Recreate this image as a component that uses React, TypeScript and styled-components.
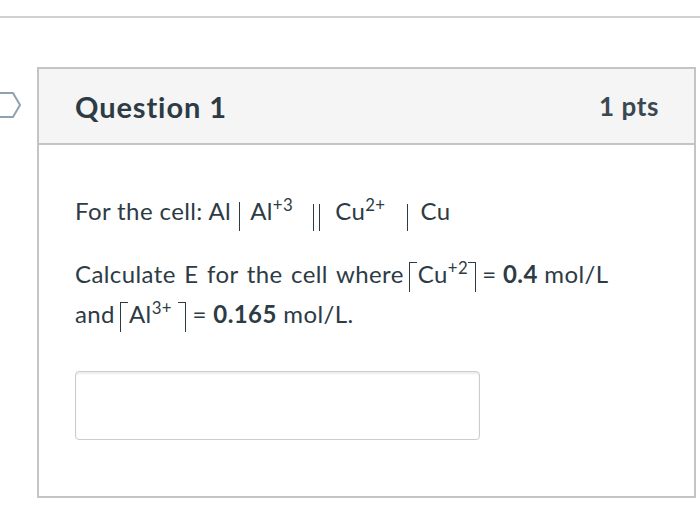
import React from 'react';
import styled, { createGlobalStyle } from 'styled-components';

const GlobalStyle = createGlobalStyle`
    html, body {
        margin: 0;
        padding: 0;
        background: #ffffff;
    }
    body {
        font-family: Lato, "Open Sans", "Liberation Sans", sans-serif;
        color: #2d3b45;
    }
`;

const Page = styled.div`
    width: 700px;
    height: 528px;
    padding-top: 16px;
    box-sizing: border-box;
    overflow: hidden;
`;

const TopRule = styled.div`
    height: 2px;
    background: #cfd2d4;
`;

const Row = styled.div`
    display: flex;
    align-items: flex-start;
    margin-top: 49px;
`;

const IconCol = styled.div`
    width: 37px;
    flex: 0 0 37px;
    padding-top: 24px;
`;

const Card = styled.div`
    flex: 0 0 659px;
    border: 2px solid #c4c4c4;
    box-sizing: border-box;
    height: 431px;
    display: flex;
    flex-direction: column;
`;

const Header = styled.div`
    display: flex;
    align-items: center;
    justify-content: space-between;
    height: 74px;
    padding: 0 35px 0 36px;
    background: #f5f5f5;
    border-bottom: 2px solid #c4c4c4;
    flex: 0 0 auto;
`;

const Title = styled.h2`
    margin: 0;
    font-size: 29px;
    font-weight: 700;
    color: #2d3b45;
    letter-spacing: 0.9px;
`;

const Points = styled.div`
    font-size: 26px;
    font-weight: 700;
    color: #3a4852;
    letter-spacing: 0.6px;
`;

const Body = styled.div`
    padding: 46px 36px 0 36px;
`;

const Para = styled.p<{ gap?: string }>`
    margin: 0 0 ${p => p.gap || '0'} 0;
    font-size: 24px;
    line-height: 40px;
    letter-spacing: 0.4px;
    color: #2d3b45;
`;

const Wide = styled.span`
    word-spacing: 2px;
`;

const Sup = styled.sup`
    font-size: 0.7em;
    line-height: 0;
    vertical-align: 0.55em;
`;

const Bar = styled.span<{ double?: boolean; before?: number; after?: number; height?: number }>`
    display: inline-block;
    width: ${p => (p.double ? '7px' : '2px')};
    height: ${p => p.height ?? 29}px;
    margin: 0 ${p => p.after ?? 8}px 0 ${p => p.before ?? 8}px;
    vertical-align: -11px;
    border-left: 1.5px solid #2d3b45;
    border-right: ${p => (p.double ? '1.5px solid #2d3b45' : 'none')};
    box-sizing: border-box;
`;

const Bracket = styled.span<{ side: 'left' | 'right' }>`
    display: inline-block;
    width: 8px;
    height: 30px;
    vertical-align: -9px;
    border-top: 1.5px solid #2d3b45;
    ${p => (p.side === 'left'
        ? 'border-left: 1.5px solid #2d3b45; margin: 0 1px 0 5px;'
        : 'border-right: 1.5px solid #2d3b45; margin: 0 6px 0 0;')}
    box-sizing: border-box;
`;

const Answer = styled.input`
    display: block;
    width: 405px;
    height: 69px;
    margin-top: 37px;
    box-sizing: border-box;
    border: 1px solid #c7cdd1;
    border-radius: 4px;
    box-shadow: inset 0 2px 2px rgba(0, 0, 0, 0.08);
    background: #ffffff;
    font-family: inherit;
    font-size: 18px;
    padding: 0 12px;
    outline: none;
`;

const NavIcon = () => (
    <svg width="22" height="28" viewBox="0 0 22 28">
        <path
            d="M-2 2 L13 2 L20 14 L13 26 L-2 26"
            fill="none"
            stroke="#8ea2b2"
            strokeWidth="2"
            strokeLinejoin="round"
        />
    </svg>
);

const App: React.FC = () => {
    return (
        <Page>
            <GlobalStyle />
            <TopRule />
            <Row>
                <IconCol>
                    <NavIcon />
                </IconCol>
                <Card>
                    <Header>
                        <Title>Question 1</Title>
                        <Points>1 pts</Points>
                    </Header>
                    <Body>
                        <Para gap="23px">
                            For the cell: Al<Bar before={8} after={9} />Al<Sup>+3</Sup>
                            <Bar double before={20} after={15} height={27} />Cu<Sup>2+</Sup>
                            <Bar before={22} after={11} height={27} />Cu
                        </Para>
                        <Para>
                            <Wide>Calculate E for the cell where</Wide><Bracket side="left" />Cu<Sup>+2</Sup><Bracket side="right" />= <b>0.4</b> mol/L
                            <br />
                            and<Bracket side="left" />Al<Sup>3+</Sup>&nbsp;<Bracket side="right" />= <b>0.165</b> mol/L.
                        </Para>
                        <Answer type="text" />
                    </Body>
                </Card>
            </Row>
        </Page>
    );
};

export default App;
